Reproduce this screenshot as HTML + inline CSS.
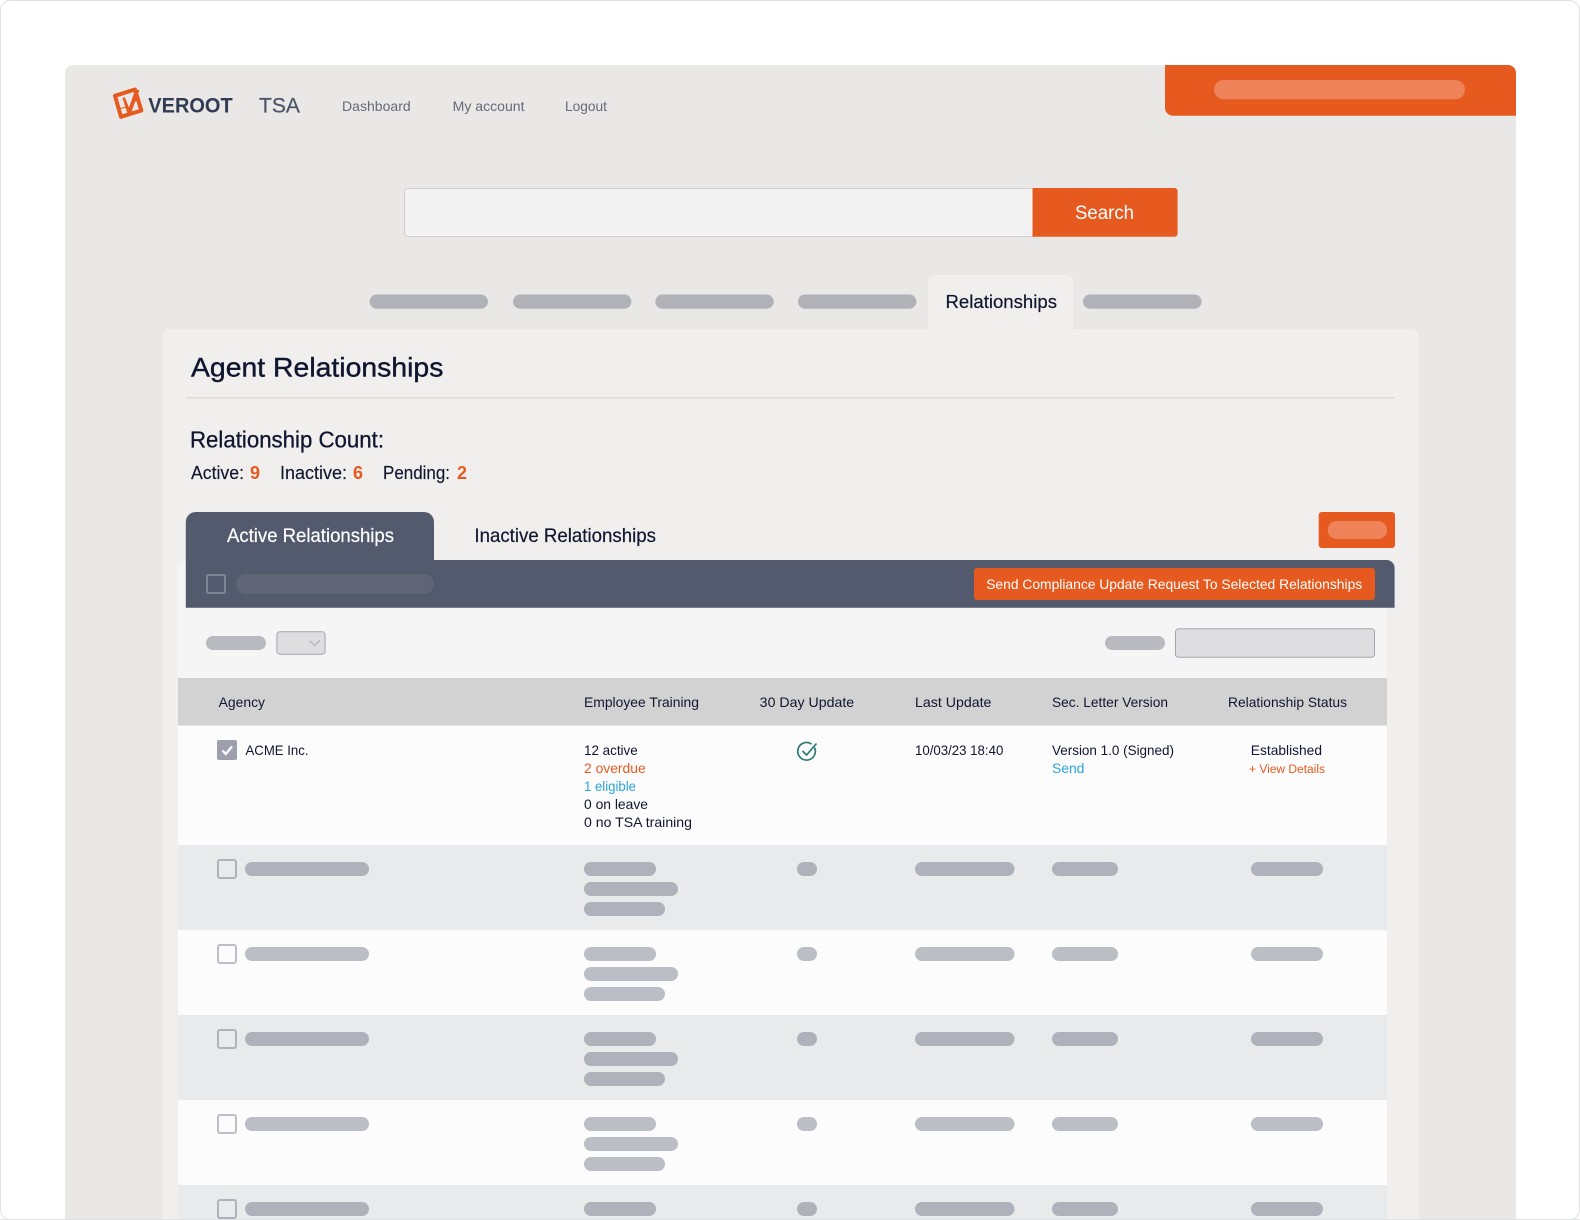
<!DOCTYPE html>
<html lang="en">
<head>
<meta charset="utf-8">
<title>Veroot TSA - Agent Relationships</title>
<style>
html,body{margin:0;padding:0;background:#fff;width:1580px;height:1220px;overflow:hidden}
svg{display:block}
text{font-family:"Liberation Sans",sans-serif;white-space:pre}
</style>
</head>
<body>
<svg xmlns="http://www.w3.org/2000/svg" width="1580" height="1220" viewBox="0 0 1580 1220">
<defs>
<g id="sk" fill="currentColor">
<rect x="218" y="15" width="18" height="18" rx="2" fill="none" stroke="currentColor" stroke-width="2"/>
<rect x="245" y="17" width="124" height="14" rx="7"/>
<rect x="584" y="17" width="72" height="14" rx="7"/>
<rect x="584" y="37" width="94" height="14" rx="7"/>
<rect x="584" y="57" width="81" height="14" rx="7"/>
<rect x="797" y="17" width="20" height="14" rx="7"/>
<rect x="915" y="17" width="99.5" height="14" rx="7"/>
<rect x="1052" y="17" width="66" height="14" rx="7"/>
<rect x="1251" y="17" width="72" height="14" rx="7"/>
</g>
</defs>

<!-- outer frame -->
<rect x="0.5" y="0.5" width="1579" height="1219" rx="10" fill="#fff" stroke="#e0e1e5"/>

<!-- app panel -->
<path d="M65 1219V73a8 8 0 0 1 8-8H1508a8 8 0 0 1 8 8V1219Z" fill="#e9e8e6"/>

<!-- top right -->
<path d="M1165 65H1508a8 8 0 0 1 8 8V115.7H1173a8 8 0 0 1-8-8Z" fill="#e65a20"/>
<rect x="1214" y="80" width="251" height="19.3" rx="9.6" fill="#ee8259"/>

<!-- logo -->
<path d="M115 95.8 135 89.5 141.3 110.5 121 116.8Z" fill="none" stroke="#e65a20" stroke-width="4" stroke-linejoin="round"/>
<path d="M122.5 98 124.8 97.3 129 107.5 135.2 90 139.5 90 131 113 127.3 113Z" fill="#e65a20"/>
<path d="M132 101.5 139 99.5" fill="none" stroke="#e65a20" stroke-width="1.5"/>
<path d="M120.5 108.5 126.5 107" fill="none" stroke="#e65a20" stroke-width="1"/>
<text x="148.3" y="112.3" font-size="21" font-weight="700" fill="#323b54" textLength="84.4" lengthAdjust="spacingAndGlyphs">VEROOT</text>
<text x="259" y="112.7" font-size="21.5" fill="#4d5467" stroke="#4d5467" stroke-width=".25" textLength="41" lengthAdjust="spacingAndGlyphs">TSA</text>

<!-- nav -->
<g font-size="14" fill="#666a78">
<text x="342" y="111.2" textLength="68.7" lengthAdjust="spacingAndGlyphs">Dashboard</text>
<text x="452.7" y="111.2" textLength="71.8" lengthAdjust="spacingAndGlyphs">My account</text>
<text x="565" y="111.2" textLength="42" lengthAdjust="spacingAndGlyphs">Logout</text>
</g>

<!-- search -->
<rect x="404.5" y="188.5" width="632" height="48" rx="3" fill="#f2f2f2" stroke="#d0d0d4"/>
<path d="M1032.5 188H1174.6a3 3 0 0 1 3 3V233.7a3 3 0 0 1-3 3H1032.5Z" fill="#e65a20"/>
<text x="1075" y="219" font-size="19" fill="#fff" textLength="59" lengthAdjust="spacingAndGlyphs">Search</text>

<!-- top tabs -->
<g fill="#b1b2b7">
<rect x="369.6" y="294.5" width="118.4" height="14.2" rx="7.1"/>
<rect x="513" y="294.5" width="118.4" height="14.2" rx="7.1"/>
<rect x="655.3" y="294.5" width="118.4" height="14.2" rx="7.1"/>
<rect x="798" y="294.5" width="118.4" height="14.2" rx="7.1"/>
<rect x="1083" y="294.5" width="118.6" height="14.2" rx="7.1"/>
</g>
<path d="M928 332V281a6 6 0 0 1 6-6H1067a6 6 0 0 1 6 6V332Z" fill="#f0efed"/>
<text x="945.5" y="308" font-size="18.5" fill="#10162f" stroke="#10162f" stroke-width=".2" textLength="111.5" lengthAdjust="spacingAndGlyphs">Relationships</text>

<!-- card -->
<path d="M162 1219V337a8 8 0 0 1 8-8H1411a8 8 0 0 1 8 8V1219Z" fill="#f0efed"/>
<text x="191" y="376.3" font-size="27" fill="#10162f" stroke="#10162f" stroke-width=".4" textLength="252.4" lengthAdjust="spacingAndGlyphs">Agent Relationships</text>
<rect x="185.8" y="397" width="1208.8" height="1.4" fill="#dcdbda"/>

<text x="190" y="447.6" font-size="23" fill="#10162f" stroke="#10162f" stroke-width=".3" textLength="194" lengthAdjust="spacingAndGlyphs">Relationship Count:</text>
<g font-size="18" fill="#10162f" stroke="#10162f" stroke-width=".15">
<text x="191" y="479" textLength="53" lengthAdjust="spacingAndGlyphs">Active:</text>
<text x="280" y="479" textLength="67" lengthAdjust="spacingAndGlyphs">Inactive:</text>
<text x="383" y="479" textLength="67" lengthAdjust="spacingAndGlyphs">Pending:</text>
</g>
<g font-size="18" font-weight="700" fill="#e65a20">
<text x="250" y="479" textLength="10" lengthAdjust="spacingAndGlyphs">9</text>
<text x="353" y="479" textLength="10" lengthAdjust="spacingAndGlyphs">6</text>
<text x="457" y="479" textLength="10" lengthAdjust="spacingAndGlyphs">2</text>
</g>

<!-- table container -->
<path d="M178 1219V568a8 8 0 0 1 8-8H1387V1219Z" fill="#f5f5f5"/>

<!-- tabs -->
<path d="M185.8 561V522a10 10 0 0 1 10-10H424a10 10 0 0 1 10 10V561Z" fill="#545a6d"/>
<text x="227" y="542.2" font-size="19.5" fill="#fff" stroke="#fff" stroke-width=".2" textLength="167" lengthAdjust="spacingAndGlyphs">Active Relationships</text>
<text x="474.4" y="542.2" font-size="19.5" fill="#10162f" stroke="#10162f" stroke-width=".2" textLength="181.6" lengthAdjust="spacingAndGlyphs">Inactive Relationships</text>

<!-- small orange button -->
<rect x="1318.7" y="512" width="76.3" height="36" rx="3" fill="#e65a20"/>
<rect x="1327.7" y="521" width="59.3" height="18" rx="9" fill="#ee8259"/>

<!-- dark bar -->
<path d="M185.8 560H1386.6a8 8 0 0 1 8 8V607.7H185.8Z" fill="#545a6d"/>
<rect x="207" y="575" width="18" height="18" rx="1.5" fill="none" stroke="#7f8494" stroke-width="2"/>
<rect x="235.8" y="574" width="198.2" height="20" rx="10" fill="#5f6575"/>
<rect x="974" y="568" width="401" height="32" rx="3" fill="#e65a20"/>
<text x="986.2" y="589" font-size="14" fill="#fff" textLength="376" lengthAdjust="spacingAndGlyphs">Send Compliance Update Request To Selected Relationships</text>

<!-- toolbar -->
<rect x="206" y="636" width="60" height="14" rx="7" fill="#b9b9c0"/>
<rect x="276.9" y="631.8" width="48.2" height="22.4" rx="3" fill="#dedee0" stroke="#a3a4b0"/>
<path d="M309.5 640.5 314.6 645.5 319.7 640.5" fill="none" stroke="#b4b5bc" stroke-width="1.3"/>
<rect x="1105" y="636" width="60" height="14" rx="7" fill="#b9b9c0"/>
<rect x="1175.5" y="628.8" width="199" height="28.4" rx="3" fill="#dedee0" stroke="#a3a4b0"/>

<!-- table header -->
<rect x="178" y="678" width="1209" height="47.7" fill="#d2d2d2"/>
<g font-size="14" fill="#10162f">
<text x="218.6" y="707" textLength="46.4" lengthAdjust="spacingAndGlyphs">Agency</text>
<text x="584" y="707" textLength="115" lengthAdjust="spacingAndGlyphs">Employee Training</text>
<text x="759.7" y="707" textLength="94.5" lengthAdjust="spacingAndGlyphs">30 Day Update</text>
<text x="915" y="707" textLength="76.4" lengthAdjust="spacingAndGlyphs">Last Update</text>
<text x="1052" y="707" textLength="116" lengthAdjust="spacingAndGlyphs">Sec. Letter Version</text>
<text x="1228" y="707" textLength="119" lengthAdjust="spacingAndGlyphs">Relationship Status</text>
</g>

<!-- rows -->
<rect x="178" y="725.7" width="1209" height="119.3" fill="#fcfcfc"/>
<rect x="178" y="845" width="1209" height="85" fill="#e9eaec"/>
<rect x="178" y="930" width="1209" height="85" fill="#fcfcfc"/>
<rect x="178" y="1015" width="1209" height="85" fill="#e9eaec"/>
<rect x="178" y="1100" width="1209" height="85" fill="#fcfcfc"/>
<rect x="178" y="1185" width="1209" height="34" fill="#e9eaec"/>

<!-- row 1 -->
<rect x="217" y="740" width="20" height="20" rx="2" fill="#9ea0ad"/>
<path d="M222.5 750.5 225.8 754 232 746.5" fill="none" stroke="#fff" stroke-width="2.2"/>
<g font-size="14" fill="#10162f">
<text x="245.5" y="755" textLength="63" lengthAdjust="spacingAndGlyphs">ACME Inc.</text>
<text x="584" y="755" textLength="53.7" lengthAdjust="spacingAndGlyphs">12 active</text>
<text x="584" y="773" fill="#e65a20" textLength="61.7" lengthAdjust="spacingAndGlyphs">2 overdue</text>
<text x="584" y="791" fill="#2aa5de" textLength="52" lengthAdjust="spacingAndGlyphs">1 eligible</text>
<text x="584" y="809" textLength="64" lengthAdjust="spacingAndGlyphs">0 on leave</text>
<text x="584" y="827" textLength="108" lengthAdjust="spacingAndGlyphs">0 no TSA training</text>
<text x="915" y="755" textLength="88.3" lengthAdjust="spacingAndGlyphs">10/03/23 18:40</text>
<text x="1052" y="755" textLength="122" lengthAdjust="spacingAndGlyphs">Version 1.0 (Signed)</text>
<text x="1052" y="773" fill="#2aa5de" textLength="32.4" lengthAdjust="spacingAndGlyphs">Send</text>
<text x="1250.8" y="755" textLength="71.2" lengthAdjust="spacingAndGlyphs">Established</text>
</g>
<text x="1249" y="773" font-size="11.5" fill="#e65a20" textLength="76" lengthAdjust="spacingAndGlyphs">+ View Details</text>
<path d="M814.5 747.5A8.8 8.8 0 1 1 811.5 744M802.5 751 806.5 755 816.5 743.5" fill="none" stroke="#2c7b74" stroke-width="1.7"/>

<!-- skeleton rows -->
<use href="#sk" x="0" y="845" color="#b0b2bb"/>
<use href="#sk" x="0" y="930" color="#bcbec6"/>
<use href="#sk" x="0" y="1015" color="#b0b2bb"/>
<use href="#sk" x="0" y="1100" color="#bcbec6"/>
<use href="#sk" x="0" y="1185" color="#b0b2bb"/>

<!-- frame bottom -->
<rect x="0" y="1219" width="1580" height="1" fill="#e0e1e5"/>
</svg>
</body>
</html>
